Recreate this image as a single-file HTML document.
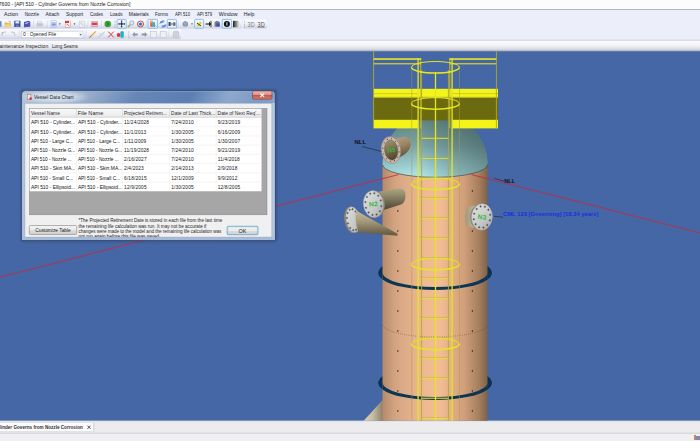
<!DOCTYPE html>
<html><head><meta charset="utf-8"><style>
*{margin:0;padding:0}
html,body{width:700px;height:441px;overflow:hidden;background:#4567a5}
svg{display:block;font-family:"Liberation Sans",sans-serif}
</style></head><body>
<svg width="700" height="441" viewBox="0 0 700 441">
<defs>
<linearGradient id="gTabrow" x1="0" y1="0" x2="0" y2="1">
 <stop offset="0" stop-color="#fdfdfe"/><stop offset="0.45" stop-color="#f3f3f7"/><stop offset="0.8" stop-color="#dcdce6"/><stop offset="1" stop-color="#a8a9ba"/>
</linearGradient>
<linearGradient id="gTb" x1="0" y1="0" x2="0" y2="1">
 <stop offset="0" stop-color="#fbfbfe"/><stop offset="0.6" stop-color="#eceef8"/><stop offset="1" stop-color="#d3d6e8"/>
</linearGradient>
<linearGradient id="gFrame" x1="0" y1="0" x2="1" y2="0.3">
 <stop offset="0" stop-color="#b2c2d8"/><stop offset="0.2" stop-color="#a6b8d0"/><stop offset="0.42" stop-color="#6686b8"/><stop offset="0.62" stop-color="#5c7eb3"/><stop offset="0.76" stop-color="#8ea8cc"/><stop offset="0.88" stop-color="#7c9ac6"/><stop offset="1" stop-color="#90aad0"/>
</linearGradient>
<linearGradient id="gClose" x1="0" y1="0" x2="0" y2="1">
 <stop offset="0" stop-color="#ecc0b8"/><stop offset="0.45" stop-color="#dc908a"/><stop offset="0.55" stop-color="#c85a4e"/><stop offset="1" stop-color="#d8806c"/>
</linearGradient>
<linearGradient id="gHdr" x1="0" y1="0" x2="0" y2="1">
 <stop offset="0" stop-color="#f8f8f8"/><stop offset="0.5" stop-color="#f2f2f2"/><stop offset="1" stop-color="#e6e6e6"/>
</linearGradient>
<linearGradient id="gBtn" x1="0" y1="0" x2="0" y2="1">
 <stop offset="0" stop-color="#f2f2f2"/><stop offset="0.5" stop-color="#ebebeb"/><stop offset="0.51" stop-color="#dddddd"/><stop offset="1" stop-color="#cfcfcf"/>
</linearGradient>
<radialGradient id="gGlow"><stop offset="0" stop-color="#e4ecf4" stop-opacity="0.9"/><stop offset="0.6" stop-color="#dce6f0" stop-opacity="0.6"/><stop offset="1" stop-color="#dce6f0" stop-opacity="0"/></radialGradient>
</defs>
<rect x="0" y="51" width="700" height="370" fill="#4567a5" />
<rect x="0" y="0" width="700" height="9.3" fill="#fcfcfd" />
<rect x="0" y="9.3" width="700" height="0.8" fill="#c6c7cd" />
<rect x="0" y="10" width="700" height="30" fill="#eceef9" />
<text x="-1.2" y="6.4" font-size="5.9" fill="#202020" font-weight="normal" text-anchor="start" textLength="131.5" lengthAdjust="spacingAndGlyphs" >7600 - [API 510 - Cylinder Governs from Nozzle Corrosion]</text>
<text x="4.1" y="15.5" font-size="5.0" fill="#222222" font-weight="normal" text-anchor="start" textLength="14.1" lengthAdjust="spacingAndGlyphs" >Action</text>
<text x="24.7" y="15.5" font-size="5.0" fill="#222222" font-weight="normal" text-anchor="start" textLength="14.3" lengthAdjust="spacingAndGlyphs" >Nozzle</text>
<text x="45.5" y="15.5" font-size="5.0" fill="#222222" font-weight="normal" text-anchor="start" textLength="13.7" lengthAdjust="spacingAndGlyphs" >Attach</text>
<text x="66" y="15.5" font-size="5.0" fill="#222222" font-weight="normal" text-anchor="start" textLength="17.2" lengthAdjust="spacingAndGlyphs" >Support</text>
<text x="90" y="15.5" font-size="5.0" fill="#222222" font-weight="normal" text-anchor="start" textLength="13" lengthAdjust="spacingAndGlyphs" >Codes</text>
<text x="110" y="15.5" font-size="5.0" fill="#222222" font-weight="normal" text-anchor="start" textLength="12.5" lengthAdjust="spacingAndGlyphs" >Loads</text>
<text x="128.8" y="15.5" font-size="5.0" fill="#222222" font-weight="normal" text-anchor="start" textLength="20.0" lengthAdjust="spacingAndGlyphs" >Materials</text>
<text x="155" y="15.5" font-size="5.0" fill="#222222" font-weight="normal" text-anchor="start" textLength="13" lengthAdjust="spacingAndGlyphs" >Forms</text>
<text x="175" y="15.5" font-size="5.0" fill="#222222" font-weight="normal" text-anchor="start" textLength="15" lengthAdjust="spacingAndGlyphs" >API 510</text>
<text x="197" y="15.5" font-size="5.0" fill="#222222" font-weight="normal" text-anchor="start" textLength="15" lengthAdjust="spacingAndGlyphs" >API 579</text>
<text x="218.8" y="15.5" font-size="5.0" fill="#222222" font-weight="normal" text-anchor="start" textLength="18.7" lengthAdjust="spacingAndGlyphs" >Window</text>
<text x="243.8" y="15.5" font-size="5.0" fill="#222222" font-weight="normal" text-anchor="start" textLength="10.7" lengthAdjust="spacingAndGlyphs" >Help</text>
<defs>
<linearGradient id="gTbs" x1="0" y1="0" x2="0" y2="1">
 <stop offset="0" stop-color="#fafbfe"/><stop offset="0.5" stop-color="#eef0f8"/><stop offset="1" stop-color="#cdd0e2"/>
</linearGradient>
<linearGradient id="gPress" x1="0" y1="0" x2="0" y2="1">
 <stop offset="0" stop-color="#f4f8fd"/><stop offset="1" stop-color="#dde9f7"/>
</linearGradient>
<linearGradient id="gGrad" x1="0" y1="0" x2="1" y2="0">
 <stop offset="0" stop-color="#202020"/><stop offset="1" stop-color="#f0f0f0"/>
</linearGradient>
</defs>
<rect x="-3" y="19.2" width="245" height="9.4" rx="1.5" fill="url(#gTbs)"/>
<rect x="243" y="19.2" width="24" height="9.4" rx="1.5" fill="url(#gTbs)"/>
<rect x="-3" y="29.0" width="129.5" height="10.3" rx="1.5" fill="url(#gTbs)"/>
<rect x="127" y="29.0" width="54" height="10.3" rx="1.5" fill="url(#gTbs)"/>
<rect x="-1" y="21.2" width="2.5" height="5.5" fill="#6a88c0"/>
<path d="M4.8 22.5 L7 22.5 L7.7 23.2 L10.9 23.2 L10.9 27 L4.8 27 Z" fill="#e3b447"/>
<path d="M5.2 24.2 L11.4 24.2 L10.6 27 L4.8 27 Z" fill="#f4d36e"/>
<path d="M8.5 21 L10.5 21.5 L9.5 23.2" fill="none" stroke="#7aa0d0" stroke-width="0.6"/>
<rect x="14.2" y="20.8" width="6.2" height="6.3" rx="0.5" fill="#2f4f9f"/>
<rect x="15.4" y="21.2" width="3.8" height="2.3" fill="#e8eef8"/>
<rect x="15.6" y="24.6" width="3.4" height="2.2" fill="#6a80c0"/>
<path d="M24 22 L28.5 20.8 L30.3 21.8 L30.3 26.8 L24 27.2 Z" fill="#4d54b8"/>
<path d="M25.3 23.5 L28.5 22.5" stroke="#e8eef8" stroke-width="0.9"/>
<line x1="33.7" y1="20.3" x2="33.7" y2="27.6" stroke="#b4b8c8" stroke-width="0.5"/>
<line x1="34.2" y1="20.3" x2="34.2" y2="27.6" stroke="#ffffff" stroke-width="0.5"/>
<rect x="36.6" y="23" width="6.4" height="3.2" rx="0.5" fill="#c6c8d0"/>
<rect x="37.8" y="21" width="4" height="2.4" fill="#e8e8ee" stroke="#c0c2ca" stroke-width="0.3"/>
<line x1="48" y1="20.3" x2="48" y2="27.6" stroke="#b4b8c8" stroke-width="0.5"/>
<line x1="48.5" y1="20.3" x2="48.5" y2="27.6" stroke="#ffffff" stroke-width="0.5"/>
<rect x="51" y="20.8" width="5.4" height="6.4" fill="#f4f6fc" stroke="#8aa0d0" stroke-width="0.4"/>
<path d="M51.6 23 L55.8 23 M51.6 24.4 L55.8 24.4 M51.6 25.8 L55.8 25.8" stroke="#3a64d0" stroke-width="0.7"/>
<path d="M58.8 23.6 L60.8 23.6 L59.8 24.8 Z" fill="#303030"/>
<rect x="65.2" y="21" width="5.4" height="6.2" fill="#fbf4f4" stroke="#c07070" stroke-width="0.4"/>
<rect x="65" y="21" width="4" height="2" fill="#d83a3a"/>
<path d="M66.5 24 L69.5 26" stroke="#d84040" stroke-width="0.8"/>
<path d="M73.5 23.6 L75.5 23.6 L74.5 24.8 Z" fill="#303030"/>
<rect x="79.2" y="21" width="5.4" height="6.2" fill="#eceef2" stroke="#b8bcc6" stroke-width="0.4"/>
<path d="M80.5 22.5 L83.5 26" stroke="#a8acb6" stroke-width="0.6"/>
<line x1="88.2" y1="20.3" x2="88.2" y2="27.6" stroke="#b4b8c8" stroke-width="0.5"/>
<line x1="88.7" y1="20.3" x2="88.7" y2="27.6" stroke="#ffffff" stroke-width="0.5"/>
<rect x="91.4" y="21.8" width="6.4" height="4.6" fill="#f2f2f6" stroke="#c04048" stroke-width="0.4"/>
<rect x="92" y="22.6" width="5.2" height="2.6" fill="#d23c48"/>
<line x1="101.5" y1="20.3" x2="101.5" y2="27.6" stroke="#b4b8c8" stroke-width="0.5"/>
<line x1="102.0" y1="20.3" x2="102.0" y2="27.6" stroke="#ffffff" stroke-width="0.5"/>
<circle cx="107.8" cy="24" r="3.3" fill="#3aa636"/>
<path d="M106.6 22.3 L108.8 24 L106.6 25.7" fill="none" stroke="#1d5c1d" stroke-width="0.8"/>
<rect x="114.6" y="20.8" width="0.8" height="0.8" fill="#9ea4b8"/>
<rect x="114.6" y="22.400000000000002" width="0.8" height="0.8" fill="#9ea4b8"/>
<rect x="114.6" y="24.000000000000004" width="0.8" height="0.8" fill="#9ea4b8"/>
<rect x="114.6" y="25.600000000000005" width="0.8" height="0.8" fill="#9ea4b8"/>
<rect x="114.6" y="27.200000000000006" width="0.8" height="0.8" fill="#9ea4b8"/>
<rect x="117.1" y="19.4" width="9.1" height="8.8" rx="0.8" fill="url(#gPress)" stroke="#66aae8" stroke-width="0.7"/>
<path d="M121.6 20.6 L121.6 27.2 M118.4 23.9 L124.9 23.9" stroke="#202020" stroke-width="0.7"/>
<circle cx="121.6" cy="23.9" r="1.1" fill="#303030"/>
<path d="M121.6 20.4 L120.6 21.6 L122.6 21.6 Z M121.6 27.4 L120.6 26.2 L122.6 26.2 Z M118.2 23.9 L119.4 22.9 L119.4 24.9 Z M125.1 23.9 L123.9 22.9 L123.9 24.9 Z" fill="#202020"/>
<circle cx="131.8" cy="22.9" r="2.1" fill="#d8ecf8" stroke="#7890a8" stroke-width="0.6"/>
<path d="M130.2 24.6 L127.9 27" stroke="#c08830" stroke-width="1.1"/>
<circle cx="140.5" cy="24" r="3.0" fill="none" stroke="#c04a30" stroke-width="1.0"/>
<circle cx="140.5" cy="24" r="1.6" fill="#2f6ad0"/>
<line x1="146.4" y1="20.3" x2="146.4" y2="27.6" stroke="#b4b8c8" stroke-width="0.5"/>
<line x1="146.9" y1="20.3" x2="146.9" y2="27.6" stroke="#ffffff" stroke-width="0.5"/>
<rect x="148" y="19.4" width="9.6" height="8.8" rx="0.8" fill="url(#gPress)" stroke="#66aae8" stroke-width="0.7"/>
<rect x="150.2" y="20.8" width="2.6" height="6" fill="#e06040"/>
<rect x="152.6" y="22.2" width="2.4" height="4.8" fill="#38b0c8"/>
<rect x="150.6" y="21.2" width="2" height="1.6" fill="#f0c040"/>
<path d="M155 25 L156.6 26.6" stroke="#909090" stroke-width="0.6"/>
<path d="M160 23.5 Q160 21 163 21 L164.5 21" fill="none" stroke="#3a7ad8" stroke-width="1"/>
<path d="M166 24.5 Q166 27 163 27 L161.5 27" fill="none" stroke="#3a7ad8" stroke-width="1"/>
<path d="M162 20.5 L164 22.5 L160.5 23.5 Z M164 27.5 L161.8 25.5 L165.6 24.6 Z" fill="#5a9ae8"/>
<rect x="167.3" y="19.4" width="9.3" height="8.8" rx="0.8" fill="url(#gPress)" stroke="#66aae8" stroke-width="0.7"/>
<rect x="168.6" y="22" width="2" height="4" fill="#404040"/>
<rect x="171.2" y="23.4" width="1.4" height="1.2" fill="#404040"/>
<rect x="173.2" y="22.4" width="2.2" height="3.4" fill="#606060"/>
<line x1="179" y1="20.3" x2="179" y2="27.6" stroke="#b4b8c8" stroke-width="0.5"/>
<line x1="179.5" y1="20.3" x2="179.5" y2="27.6" stroke="#ffffff" stroke-width="0.5"/>
<path d="M182.6 22.2 L185.3 21 L188 22.2 L188 25.8 L185.3 27.1 L182.6 25.8 Z" fill="#8a98a8"/>
<path d="M182.6 22.2 L185.3 23.4 L188 22.2 M185.3 23.4 L185.3 27.1" fill="none" stroke="#d0d8e0" stroke-width="0.4"/>
<path d="M191 23.6 L193 23.6 L192 24.8 Z" fill="#303030"/>
<rect x="194.6" y="19.4" width="9.0" height="8.8" rx="0.8" fill="url(#gPress)" stroke="#66aae8" stroke-width="0.7"/>
<path d="M196.3 25.8 L200.4 21.4 L202 23 L197.9 27.3 Z" fill="#e8d020"/>
<path d="M197 23 L201 26" stroke="#202020" stroke-width="0.9"/>
<path d="M205.6 24 L209.3 24" stroke="#181818" stroke-width="1.1"/>
<path d="M209 21.6 L211.3 24 L209 26.4 Z" fill="#181818"/>
<rect x="210.6" y="20.8" width="0.8" height="6.4" fill="#181818"/>
<path d="M214.6 22 L217 20.8 L219.8 22 L219.8 26.8 L214.6 26.8 Z" fill="#7a7a80"/>
<rect x="216.4" y="23.4" width="3.2" height="3" fill="#3050d8"/>
<rect x="222.2" y="19.4" width="9.4" height="8.8" rx="0.8" fill="url(#gPress)" stroke="#66aae8" stroke-width="0.7"/>
<circle cx="226.9" cy="23.9" r="3.0" fill="#101010"/>
<rect x="226.4" y="22.2" width="1" height="3.4" fill="#f0f0f0"/>
<rect x="233" y="20.8" width="6.4" height="6.4" fill="url(#gGrad)"/>
<rect x="244" y="20.8" width="0.8" height="0.8" fill="#9ea4b8"/>
<rect x="244" y="22.400000000000002" width="0.8" height="0.8" fill="#9ea4b8"/>
<rect x="244" y="24.000000000000004" width="0.8" height="0.8" fill="#9ea4b8"/>
<rect x="244" y="25.600000000000005" width="0.8" height="0.8" fill="#9ea4b8"/>
<rect x="244" y="27.200000000000006" width="0.8" height="0.8" fill="#9ea4b8"/>
<text x="247.6" y="26.8" font-size="6.3" fill="#7c7c7c" font-weight="normal" text-anchor="start" textLength="7.0" lengthAdjust="spacingAndGlyphs" >3D</text>
<text x="257.6" y="26.8" font-size="6.3" fill="#505050" font-weight="normal" text-anchor="start" textLength="7.0" lengthAdjust="spacingAndGlyphs" >3D</text>
<line x1="257.6" y1="27.4" x2="264.8" y2="27.4" stroke="#6a6a6a" stroke-width="0.5"/>
<path d="M2 35.5 Q1.8 32 4.5 32 L5.8 32" fill="none" stroke="#b4b8c4" stroke-width="0.9"/>
<path d="M1.2 33.3 L2.4 31.8 L3.2 34.2 Z" fill="#b4b8c4"/>
<path d="M15 35.5 Q15.2 32 12.5 32 L11.2 32" fill="none" stroke="#b4b8c4" stroke-width="0.9"/>
<line x1="19.3" y1="30" x2="19.3" y2="38.4" stroke="#b4b8c8" stroke-width="0.5"/>
<line x1="19.8" y1="30" x2="19.8" y2="38.4" stroke="#ffffff" stroke-width="0.5"/>
<rect x="21.2" y="31.1" width="61.7" height="6.7" fill="#ffffff" stroke="#aab0c6" stroke-width="0.5"/>
<rect x="78.6" y="31.4" width="4" height="6.1" fill="#f0f2f8"/>
<path d="M79.7 34.2 L81.7 34.2 L80.7 35.400000000000006 Z" fill="#303030"/>
<text x="22.9" y="36.2" font-size="5.2" fill="#1a1a1a" font-weight="normal" text-anchor="start" textLength="33.2" lengthAdjust="spacingAndGlyphs" >0 : Opened File</text>
<line x1="86.3" y1="30" x2="86.3" y2="38.4" stroke="#b4b8c8" stroke-width="0.5"/>
<line x1="86.8" y1="30" x2="86.8" y2="38.4" stroke="#ffffff" stroke-width="0.5"/>
<path d="M89.8 37.3 L95.8 31.4" stroke="#e4a830" stroke-width="1.2"/>
<path d="M89.6 37.5 L90.6 36.4" stroke="#6a5030" stroke-width="0.8"/>
<path d="M98.7 37.2 L104.8 31.6" stroke="#c8ccd6" stroke-width="1.1"/>
<path d="M99 33.5 Q101 35 104 34" fill="none" stroke="#c0c4ce" stroke-width="0.5"/>
<path d="M108.2 31.6 L113.8 37.4 M113.8 31.6 L108.2 37.4" stroke="#d83c34" stroke-width="1.0"/>
<circle cx="118.6" cy="35" r="1.9" fill="#e83030"/>
<rect x="120.4" y="31.2" width="3.4" height="6.6" rx="1" fill="#20b0d0"/>
<rect x="128.4" y="30.8" width="0.8" height="0.8" fill="#9ea4b8"/>
<rect x="128.4" y="32.4" width="0.8" height="0.8" fill="#9ea4b8"/>
<rect x="128.4" y="34.0" width="0.8" height="0.8" fill="#9ea4b8"/>
<rect x="128.4" y="35.6" width="0.8" height="0.8" fill="#9ea4b8"/>
<rect x="128.4" y="37.2" width="0.8" height="0.8" fill="#9ea4b8"/>
<path d="M132.2 34.5 L134.8 32 L134.8 33.6 L137.7 33.6 L137.7 35.4 L134.8 35.4 L134.8 37 Z" fill="#8e96a6"/>
<path d="M147.3 34.5 L144.7 32 L144.7 33.6 L141.6 33.6 L141.6 35.4 L144.7 35.4 L144.7 37 Z" fill="#8e96a6"/>
<rect x="150.7" y="31.4" width="6" height="6.2" fill="#eef0f4" stroke="#b8bcc8" stroke-width="0.5"/>
<rect x="160.2" y="31.4" width="6" height="6.2" fill="#eef0f4" stroke="#b8bcc8" stroke-width="0.5"/>
<line x1="169.2" y1="30" x2="169.2" y2="38.4" stroke="#b4b8c8" stroke-width="0.5"/>
<line x1="169.7" y1="30" x2="169.7" y2="38.4" stroke="#ffffff" stroke-width="0.5"/>
<rect x="173.4" y="31.2" width="5.2" height="6.6" rx="1" fill="#d0d2d8" stroke="#a8acb6" stroke-width="0.4"/>
<rect x="0" y="39.6" width="700" height="0.8" fill="#d4d5dd" />
<rect x="0" y="40.3" width="700" height="11" fill="url(#gTabrow)" />
<text x="-0.5" y="47.9" font-size="5.3" fill="#222222" font-weight="normal" text-anchor="start" textLength="48.7" lengthAdjust="spacingAndGlyphs" >aintenance Inspection</text>
<text x="52" y="47.9" font-size="5.3" fill="#222222" font-weight="normal" text-anchor="start" textLength="25.8" lengthAdjust="spacingAndGlyphs" >Long Seams</text>
<rect x="0" y="420.8" width="700" height="12.2" fill="#ececee" />
<rect x="0" y="420.8" width="700" height="1.2" fill="#e2e3e8" />
<rect x="-1" y="422.5" width="94.5" height="9" fill="#fbfbfb" stroke='#d2d2d6' stroke-width='0.5'/>
<rect x="93.6" y="423" width="0.6" height="8.5" fill="#c8c8cc" />
<text x="-0.4" y="429.0" font-size="5.3" fill="#141414" font-weight="bold" text-anchor="start" textLength="83.2" lengthAdjust="spacingAndGlyphs" opacity="0.9">linder Governs from Nozzle Corrosion</text>
<path d="M87.4 425.6 L90.6 428.9 M90.6 425.6 L87.4 428.9" stroke="#2a2a2a" stroke-width="0.8"/>
<rect x="0" y="432.6" width="700" height="0.6" fill="#d6d6d8" />
<rect x="0" y="433.2" width="700" height="7.8" fill="#f0f0f0" />
<rect x="694" y="435" width="2" height="5" fill="#d08060"/><rect x="696" y="436" width="4" height="4" fill="#7090b0"/>
<clipPath id="clipView"><rect x="0" y="51.2" width="700" height="369.6"/></clipPath><g clip-path="url(#clipView)">
<defs>
<linearGradient id="gCyl" gradientUnits="userSpaceOnUse" x1="382.5" y1="0" x2="487.5" y2="0">
 <stop offset="0" stop-color="#b48a6a"/><stop offset="0.12" stop-color="#d4a482"/><stop offset="0.4" stop-color="#efba92"/><stop offset="0.55" stop-color="#f2bd94"/><stop offset="0.78" stop-color="#d09e7a"/><stop offset="0.92" stop-color="#a57e5e"/><stop offset="1" stop-color="#806248"/>
</linearGradient>
<linearGradient id="gDome" gradientUnits="userSpaceOnUse" x1="0" y1="178" x2="0" y2="120">
 <stop offset="0" stop-color="#b4eaee"/><stop offset="0.2" stop-color="#a0d2d6"/><stop offset="0.55" stop-color="#7ea6a8"/><stop offset="1" stop-color="#628686"/>
</linearGradient>
<linearGradient id="gDomeR" gradientUnits="userSpaceOnUse" x1="382" y1="0" x2="488" y2="0">
 <stop offset="0" stop-color="#1e3434" stop-opacity="0.08"/><stop offset="0.35" stop-color="#1e3434" stop-opacity="0"/><stop offset="0.7" stop-color="#1e3434" stop-opacity="0.25"/><stop offset="1" stop-color="#1e3434" stop-opacity="0.42"/>
</linearGradient>
<linearGradient id="gPipe" x1="0" y1="0" x2="0" y2="1">
 <stop offset="0" stop-color="#e2d6b6"/><stop offset="0.35" stop-color="#c9b994"/><stop offset="1" stop-color="#6e6248"/>
</linearGradient>
<linearGradient id="gFace" x1="0" y1="0" x2="1" y2="1">
 <stop offset="0" stop-color="#b8ac90"/><stop offset="1" stop-color="#6c6048"/>
</linearGradient>
<linearGradient id="gFl" x1="0" y1="0" x2="1" y2="1">
 <stop offset="0" stop-color="#ece6e0"/><stop offset="0.6" stop-color="#cfc6bc"/><stop offset="1" stop-color="#9a9088"/>
</linearGradient>
<linearGradient id="gPipe5" x1="0" y1="0" x2="0.3" y2="1">
 <stop offset="0" stop-color="#bca888"/><stop offset="0.5" stop-color="#9a8466"/><stop offset="1" stop-color="#5e4e38"/>
</linearGradient>
<linearGradient id="gFace5" x1="0" y1="0" x2="0.2" y2="1">
 <stop offset="0" stop-color="#a49a74"/><stop offset="0.6" stop-color="#746848"/><stop offset="1" stop-color="#524630"/>
</linearGradient>
<linearGradient id="gPipe2" x1="0" y1="0" x2="0" y2="1">
 <stop offset="0" stop-color="#aca484"/><stop offset="0.3" stop-color="#928a6c"/><stop offset="1" stop-color="#48422f"/>
</linearGradient>
<linearGradient id="gPipe4" x1="0" y1="0" x2="0" y2="1">
 <stop offset="0" stop-color="#c8bc9a"/><stop offset="0.4" stop-color="#a89c7c"/><stop offset="1" stop-color="#5e5642"/>
</linearGradient>
<linearGradient id="gPipe3" x1="0" y1="0" x2="1" y2="0">
 <stop offset="0" stop-color="#a09878"/><stop offset="1" stop-color="#d0c8b0"/>
</linearGradient>
<linearGradient id="gFlW" x1="0" y1="0" x2="1" y2="1">
 <stop offset="0" stop-color="#dfe3e3"/><stop offset="0.6" stop-color="#c4c8c8"/><stop offset="1" stop-color="#a2a6a6"/>
</linearGradient>
<linearGradient id="gPipeB" x1="0" y1="0" x2="1" y2="0">
 <stop offset="0" stop-color="#e0d8c0"/><stop offset="0.5" stop-color="#c4baa0"/><stop offset="1" stop-color="#8a8068"/>
</linearGradient>
</defs>
<g id="scene">
<path d="M363.5 421 L383 399.5 L383 421 Z" fill="url(#gPipeB)"/>
<ellipse cx="435.1" cy="272.4" rx="56.6" ry="16.8" fill="#0e3a5a"/>
<ellipse cx="435.1" cy="273.2" rx="56.6" ry="16.8" fill="#0b3252"/>
<ellipse cx="435.1" cy="382.4" rx="56.6" ry="16.8" fill="#0e3a5a"/>
<ellipse cx="435.1" cy="383.2" rx="56.6" ry="16.8" fill="#0b3252"/>
<rect x="382.5" y="164" width="105" height="260" fill="url(#gCyl)"/>
<path d="M382.5 272.4 A52.6 14.6 0 0 0 487.7 272.4 L487.7 279.40 A56.6 16.8 0 0 1 382.5 279.40 Z" fill="#0c3656"/>
<path d="M382.5 382.4 A52.6 14.6 0 0 0 487.7 382.4 L487.7 389.40 A56.6 16.8 0 0 1 382.5 389.40 Z" fill="#0c3656"/>
<path d="M382.5 164.5 A52.5 52 0 0 1 487.5 164.5 A52.5 12.8 0 0 1 382.5 164.5 Z" fill="url(#gDome)"/>
<path d="M382.5 164.5 A52.5 52 0 0 1 487.5 164.5 A52.5 12.8 0 0 1 382.5 164.5 Z" fill="url(#gDomeR)"/>
<path d="M382.5 164.5 A52.5 12.8 0 0 0 487.5 164.5" fill="none" stroke="#283838" stroke-width="0.6"/>
<path d="M-2 277.7 L398.5 174.6" stroke="#c8283e" stroke-width="0.85" fill="none"/>
<path d="M471.5 174.6 L702 233.4" stroke="#c8283e" stroke-width="0.85" fill="none"/>
<path d="M383 325.3 A52.3 12.4 0 0 0 487.4 325.3" fill="none" stroke="#4a3428" stroke-width="0.55" stroke-dasharray="0.7 1.5"/>
<rect x="397.2" y="190.4" width="1.2" height="1.2" fill="#201814"/>
<rect x="397.2" y="210.4" width="1.2" height="1.2" fill="#201814"/>
<rect x="397.2" y="230.4" width="1.2" height="1.2" fill="#201814"/>
<rect x="397.2" y="250.4" width="1.2" height="1.2" fill="#201814"/>
<rect x="397.2" y="270.4" width="1.2" height="1.2" fill="#201814"/>
<rect x="397.2" y="290.4" width="1.2" height="1.2" fill="#201814"/>
<rect x="397.2" y="310.4" width="1.2" height="1.2" fill="#201814"/>
<rect x="397.2" y="330.4" width="1.2" height="1.2" fill="#201814"/>
<rect x="397.2" y="350.4" width="1.2" height="1.2" fill="#201814"/>
<rect x="397.2" y="370.4" width="1.2" height="1.2" fill="#201814"/>
<rect x="397.2" y="390.4" width="1.2" height="1.2" fill="#201814"/>
<rect x="397.2" y="410.4" width="1.2" height="1.2" fill="#201814"/>
<rect x="471.79999999999995" y="190.4" width="1.2" height="1.2" fill="#201814"/>
<rect x="471.79999999999995" y="210.4" width="1.2" height="1.2" fill="#201814"/>
<rect x="471.79999999999995" y="230.4" width="1.2" height="1.2" fill="#201814"/>
<rect x="471.79999999999995" y="250.4" width="1.2" height="1.2" fill="#201814"/>
<rect x="471.79999999999995" y="270.4" width="1.2" height="1.2" fill="#201814"/>
<rect x="471.79999999999995" y="290.4" width="1.2" height="1.2" fill="#201814"/>
<rect x="471.79999999999995" y="310.4" width="1.2" height="1.2" fill="#201814"/>
<rect x="471.79999999999995" y="330.4" width="1.2" height="1.2" fill="#201814"/>
<rect x="471.79999999999995" y="350.4" width="1.2" height="1.2" fill="#201814"/>
<rect x="471.79999999999995" y="370.4" width="1.2" height="1.2" fill="#201814"/>
<rect x="471.79999999999995" y="390.4" width="1.2" height="1.2" fill="#201814"/>
<rect x="471.79999999999995" y="410.4" width="1.2" height="1.2" fill="#201814"/>
</g>
<g id="platform">
<rect x="373.6" y="97.4" width="124.4" height="23" fill="#6c6a10" />
<rect x="373.6" y="88.8" width="124.4" height="8.8" fill="#f4f41a" />
<line x1="373.6" y1="97.2" x2="498" y2="97.2" stroke="#b4ac1e" stroke-width="0.6"/>
<rect x="373.6" y="119.8" width="44.6" height="8.6" fill="#f4f41a" />
<rect x="452.2" y="119.8" width="45.8" height="8.6" fill="#f4f41a" />
<line x1="373.6" y1="93.6" x2="418" y2="93.6" stroke="#b4ac1e" stroke-width="0.5"/>
<line x1="452.2" y1="93.6" x2="498" y2="93.6" stroke="#b4ac1e" stroke-width="0.5"/>
<line x1="373.6" y1="51" x2="373.6" y2="128.4" stroke="#b4ac1e" stroke-width="0.9"/>
<line x1="496.4" y1="51" x2="496.4" y2="128.4" stroke="#b4ac1e" stroke-width="0.9"/>
<line x1="420.8" y1="58" x2="420.8" y2="128.4" stroke="#c8c024" stroke-width="1.0"/>
<line x1="449.8" y1="58" x2="449.8" y2="128.4" stroke="#c8c024" stroke-width="1.0"/>
<rect x="373.6" y="58.2" width="47.4" height="1.7" fill="#e2de2c"/>
<rect x="373.6" y="63.1" width="47.4" height="1.3" fill="#d2cc30"/>
<rect x="449.6" y="58.2" width="46.8" height="1.7" fill="#e2de2c"/>
<rect x="449.6" y="63.1" width="46.8" height="1.3" fill="#d2cc30"/>
</g>
<g id="ladder">
<line x1="411.8" y1="66" x2="411.8" y2="421" stroke="#a89c3c" stroke-width="0.6" opacity="0.8"/>
<line x1="459.5" y1="66" x2="459.5" y2="421" stroke="#a89c3c" stroke-width="0.6" opacity="0.8"/>
<line x1="421.6" y1="70" x2="421.6" y2="421" stroke="#b0a838" stroke-width="0.9"/>
<line x1="448.4" y1="70" x2="448.4" y2="421" stroke="#b0a838" stroke-width="0.9"/>
<line x1="421.6" y1="137.5" x2="448.4" y2="137.5" stroke="#8a8030" stroke-width="0.5" opacity="0.6"/>
<line x1="421.6" y1="138.2" x2="448.4" y2="138.2" stroke="#e6e61e" stroke-width="1.1"/>
<line x1="421.6" y1="157.5" x2="448.4" y2="157.5" stroke="#8a8030" stroke-width="0.5" opacity="0.6"/>
<line x1="421.6" y1="158.2" x2="448.4" y2="158.2" stroke="#e6e61e" stroke-width="1.1"/>
<line x1="421.6" y1="177.5" x2="448.4" y2="177.5" stroke="#8a8030" stroke-width="0.5" opacity="0.6"/>
<line x1="421.6" y1="178.2" x2="448.4" y2="178.2" stroke="#e6e61e" stroke-width="1.1"/>
<line x1="421.6" y1="197.5" x2="448.4" y2="197.5" stroke="#8a8030" stroke-width="0.5" opacity="0.6"/>
<line x1="421.6" y1="198.2" x2="448.4" y2="198.2" stroke="#e6e61e" stroke-width="1.1"/>
<line x1="421.6" y1="217.5" x2="448.4" y2="217.5" stroke="#8a8030" stroke-width="0.5" opacity="0.6"/>
<line x1="421.6" y1="218.2" x2="448.4" y2="218.2" stroke="#e6e61e" stroke-width="1.1"/>
<line x1="421.6" y1="237.5" x2="448.4" y2="237.5" stroke="#8a8030" stroke-width="0.5" opacity="0.6"/>
<line x1="421.6" y1="238.2" x2="448.4" y2="238.2" stroke="#e6e61e" stroke-width="1.1"/>
<line x1="421.6" y1="257.5" x2="448.4" y2="257.5" stroke="#8a8030" stroke-width="0.5" opacity="0.6"/>
<line x1="421.6" y1="258.2" x2="448.4" y2="258.2" stroke="#e6e61e" stroke-width="1.1"/>
<line x1="421.6" y1="277.5" x2="448.4" y2="277.5" stroke="#8a8030" stroke-width="0.5" opacity="0.6"/>
<line x1="421.6" y1="278.2" x2="448.4" y2="278.2" stroke="#e6e61e" stroke-width="1.1"/>
<line x1="421.6" y1="297.5" x2="448.4" y2="297.5" stroke="#8a8030" stroke-width="0.5" opacity="0.6"/>
<line x1="421.6" y1="298.2" x2="448.4" y2="298.2" stroke="#e6e61e" stroke-width="1.1"/>
<line x1="421.6" y1="317.5" x2="448.4" y2="317.5" stroke="#8a8030" stroke-width="0.5" opacity="0.6"/>
<line x1="421.6" y1="318.2" x2="448.4" y2="318.2" stroke="#e6e61e" stroke-width="1.1"/>
<line x1="421.6" y1="337.5" x2="448.4" y2="337.5" stroke="#8a8030" stroke-width="0.5" opacity="0.6"/>
<line x1="421.6" y1="338.2" x2="448.4" y2="338.2" stroke="#e6e61e" stroke-width="1.1"/>
<line x1="421.6" y1="357.5" x2="448.4" y2="357.5" stroke="#8a8030" stroke-width="0.5" opacity="0.6"/>
<line x1="421.6" y1="358.2" x2="448.4" y2="358.2" stroke="#e6e61e" stroke-width="1.1"/>
<line x1="421.6" y1="377.5" x2="448.4" y2="377.5" stroke="#8a8030" stroke-width="0.5" opacity="0.6"/>
<line x1="421.6" y1="378.2" x2="448.4" y2="378.2" stroke="#e6e61e" stroke-width="1.1"/>
<line x1="421.6" y1="397.5" x2="448.4" y2="397.5" stroke="#8a8030" stroke-width="0.5" opacity="0.6"/>
<line x1="421.6" y1="398.2" x2="448.4" y2="398.2" stroke="#e6e61e" stroke-width="1.1"/>
<line x1="421.6" y1="417.5" x2="448.4" y2="417.5" stroke="#8a8030" stroke-width="0.5" opacity="0.6"/>
<line x1="421.6" y1="418.2" x2="448.4" y2="418.2" stroke="#e6e61e" stroke-width="1.1"/>
<path d="M411.5 67.3 A23.9 5.8 0 0 1 459.3 67.3" fill="none" stroke="#e6e61e" stroke-width="1.0"/>
<path d="M411.5 67.3 A23.9 5.8 0 0 0 459.3 67.3" fill="none" stroke="#e6e61e" stroke-width="1.5"/>
<path d="M411.5 103.5 A23.9 5.8 0 0 1 459.3 103.5" fill="none" stroke="#e6e61e" stroke-width="1.0"/>
<path d="M411.5 103.5 A23.9 5.8 0 0 0 459.3 103.5" fill="none" stroke="#e6e61e" stroke-width="1.5"/>
<path d="M411.5 184 A23.9 5.8 0 0 1 459.3 184" fill="none" stroke="#e6e61e" stroke-width="1.0"/>
<path d="M411.5 184 A23.9 5.8 0 0 0 459.3 184" fill="none" stroke="#e6e61e" stroke-width="1.5"/>
<path d="M411.5 264.2 A23.9 5.8 0 0 1 459.3 264.2" fill="none" stroke="#e6e61e" stroke-width="1.0"/>
<path d="M411.5 264.2 A23.9 5.8 0 0 0 459.3 264.2" fill="none" stroke="#e6e61e" stroke-width="1.5"/>
<path d="M411.5 344 A23.9 5.8 0 0 1 459.3 344" fill="none" stroke="#e6e61e" stroke-width="1.0"/>
<path d="M411.5 344 A23.9 5.8 0 0 0 459.3 344" fill="none" stroke="#e6e61e" stroke-width="1.5"/>
<line x1="418.1" y1="58" x2="418.1" y2="421" stroke="#e6e61e" stroke-width="1.3"/>
<line x1="452.1" y1="58" x2="452.1" y2="421" stroke="#e6e61e" stroke-width="1.3"/>
<line x1="435.5" y1="72" x2="435.5" y2="421" stroke="#e6e61e" stroke-width="1.3"/>
</g>
<g id="nozzles">
<path d="M391 140 L405 136.5 Q411 138 410.5 146 Q409 152 402 156 L394 160 Z" fill="url(#gPipe5)"/>
<g transform="translate(390.9 150) rotate(-8)">
<ellipse rx="9.8" ry="13.6" fill="#c6b6a8" stroke="#8a7c74" stroke-width="0.5"/>
<ellipse cx="0.3" cy="0.2" rx="6.6" ry="10" fill="url(#gFace5)" stroke="#6a5a48" stroke-width="0.5"/>
<circle cx="7.76" cy="2.96" r="0.55" fill="#4a3040"/>
<circle cx="5.68" cy="8.08" r="0.55" fill="#4a3040"/>
<circle cx="2.08" cy="11.03" r="0.55" fill="#4a3040"/>
<circle cx="-2.08" cy="11.03" r="0.55" fill="#4a3040"/>
<circle cx="-5.68" cy="8.08" r="0.55" fill="#4a3040"/>
<circle cx="-7.76" cy="2.96" r="0.55" fill="#4a3040"/>
<circle cx="-7.76" cy="-2.96" r="0.55" fill="#4a3040"/>
<circle cx="-5.68" cy="-8.08" r="0.55" fill="#4a3040"/>
<circle cx="-2.08" cy="-11.03" r="0.55" fill="#4a3040"/>
<circle cx="2.08" cy="-11.03" r="0.55" fill="#4a3040"/>
<circle cx="5.68" cy="-8.08" r="0.55" fill="#4a3040"/>
<circle cx="7.76" cy="-2.96" r="0.55" fill="#4a3040"/>
<text x="0.5" y="2.4" font-size="6.2" fill="#3cb03c" text-anchor="middle" font-weight="bold" textLength="8" lengthAdjust="spacingAndGlyphs">N5</text>
</g>
<path d="M376 192 L400 188.5 Q406 189 405.5 196.5 Q405 203 401 204.5 L382 210.5 Z" fill="url(#gPipe2)"/>
<g transform="translate(373.4 204.1) rotate(-6)">
<ellipse cx="1.2" rx="10.2" ry="13.6" fill="#8e8678"/>
<ellipse rx="10.0" ry="13.5" fill="url(#gFlW)" stroke="#a8a49a" stroke-width="0.4"/>
<circle cx="7.73" cy="2.87" r="0.75" fill="#6a6460" stroke="#4a4440" stroke-width="0.4"/>
<circle cx="5.66" cy="7.83" r="0.75" fill="#6a6460" stroke="#4a4440" stroke-width="0.4"/>
<circle cx="2.07" cy="10.69" r="0.75" fill="#6a6460" stroke="#4a4440" stroke-width="0.4"/>
<circle cx="-2.07" cy="10.69" r="0.75" fill="#6a6460" stroke="#4a4440" stroke-width="0.4"/>
<circle cx="-5.66" cy="7.83" r="0.75" fill="#6a6460" stroke="#4a4440" stroke-width="0.4"/>
<circle cx="-7.73" cy="2.87" r="0.75" fill="#6a6460" stroke="#4a4440" stroke-width="0.4"/>
<circle cx="-7.73" cy="-2.87" r="0.75" fill="#6a6460" stroke="#4a4440" stroke-width="0.4"/>
<circle cx="-5.66" cy="-7.83" r="0.75" fill="#6a6460" stroke="#4a4440" stroke-width="0.4"/>
<circle cx="-2.07" cy="-10.69" r="0.75" fill="#6a6460" stroke="#4a4440" stroke-width="0.4"/>
<circle cx="2.07" cy="-10.69" r="0.75" fill="#6a6460" stroke="#4a4440" stroke-width="0.4"/>
<circle cx="5.66" cy="-7.83" r="0.75" fill="#6a6460" stroke="#4a4440" stroke-width="0.4"/>
<circle cx="7.73" cy="-2.87" r="0.75" fill="#6a6460" stroke="#4a4440" stroke-width="0.4"/>
<text x="0" y="2.3" font-size="6.4" fill="#38b838" text-anchor="middle" font-weight="bold" textLength="8.6" lengthAdjust="spacingAndGlyphs">N2</text>
</g>
<g transform="translate(352.9 219.7) rotate(-10)">
<ellipse cx="-1.0" rx="7.6" ry="13.4" fill="#8a8478"/>
<ellipse cx="0.3" rx="7.2" ry="13.1" fill="url(#gFlW)" stroke="#8a8478" stroke-width="0.4"/>
<circle cx="5.56" cy="2.78" r="0.75" fill="#6a6460" stroke="#4a4440" stroke-width="0.4"/>
<circle cx="4.07" cy="7.60" r="0.75" fill="#6a6460" stroke="#4a4440" stroke-width="0.4"/>
<circle cx="1.49" cy="10.38" r="0.75" fill="#6a6460" stroke="#4a4440" stroke-width="0.4"/>
<circle cx="-1.49" cy="10.38" r="0.75" fill="#6a6460" stroke="#4a4440" stroke-width="0.4"/>
<circle cx="-4.07" cy="7.60" r="0.75" fill="#6a6460" stroke="#4a4440" stroke-width="0.4"/>
<circle cx="-5.56" cy="2.78" r="0.75" fill="#6a6460" stroke="#4a4440" stroke-width="0.4"/>
<circle cx="-5.56" cy="-2.78" r="0.75" fill="#6a6460" stroke="#4a4440" stroke-width="0.4"/>
<circle cx="-4.07" cy="-7.60" r="0.75" fill="#6a6460" stroke="#4a4440" stroke-width="0.4"/>
<circle cx="-1.49" cy="-10.38" r="0.75" fill="#6a6460" stroke="#4a4440" stroke-width="0.4"/>
<circle cx="1.49" cy="-10.38" r="0.75" fill="#6a6460" stroke="#4a4440" stroke-width="0.4"/>
<circle cx="4.07" cy="-7.60" r="0.75" fill="#6a6460" stroke="#4a4440" stroke-width="0.4"/>
<circle cx="5.56" cy="-2.78" r="0.75" fill="#6a6460" stroke="#4a4440" stroke-width="0.4"/>
</g>
<path d="M356 210.5 L397.5 233.8 L397.5 235.8 L358.5 232.5 Q354.5 221 356 210.5 Z" fill="url(#gPipe4)"/>
<path d="M478 205 L468 207 Q463 216 466.5 226 L480 229 Z" fill="url(#gPipe3)"/>
<g transform="translate(482 217) rotate(4)">
<ellipse cx="-1.2" rx="10.7" ry="13.3" fill="#8c8a80"/>
<ellipse rx="10.4" ry="13.2" fill="url(#gFlW)" stroke="#a8a49a" stroke-width="0.4"/>
<circle cx="8.04" cy="2.80" r="0.75" fill="#6a6460" stroke="#3a3834" stroke-width="0.4"/>
<circle cx="5.88" cy="7.65" r="0.75" fill="#6a6460" stroke="#3a3834" stroke-width="0.4"/>
<circle cx="2.15" cy="10.46" r="0.75" fill="#6a6460" stroke="#3a3834" stroke-width="0.4"/>
<circle cx="-2.15" cy="10.46" r="0.75" fill="#6a6460" stroke="#3a3834" stroke-width="0.4"/>
<circle cx="-5.88" cy="7.65" r="0.75" fill="#6a6460" stroke="#3a3834" stroke-width="0.4"/>
<circle cx="-8.04" cy="2.80" r="0.75" fill="#6a6460" stroke="#3a3834" stroke-width="0.4"/>
<circle cx="-8.04" cy="-2.80" r="0.75" fill="#6a6460" stroke="#3a3834" stroke-width="0.4"/>
<circle cx="-5.88" cy="-7.65" r="0.75" fill="#6a6460" stroke="#3a3834" stroke-width="0.4"/>
<circle cx="-2.15" cy="-10.46" r="0.75" fill="#6a6460" stroke="#3a3834" stroke-width="0.4"/>
<circle cx="2.15" cy="-10.46" r="0.75" fill="#6a6460" stroke="#3a3834" stroke-width="0.4"/>
<circle cx="5.88" cy="-7.65" r="0.75" fill="#6a6460" stroke="#3a3834" stroke-width="0.4"/>
<circle cx="8.04" cy="-2.80" r="0.75" fill="#6a6460" stroke="#3a3834" stroke-width="0.4"/>
<text x="0" y="2.4" font-size="6.6" fill="#38b838" text-anchor="middle" font-weight="bold" textLength="8.6" lengthAdjust="spacingAndGlyphs">N3</text>
</g>
</g>
<path d="M362 146.5 L381.5 151.5" stroke="#202028" stroke-width="0.6"/>
<text x="354.6" y="144" font-size="5.0" fill="#101018" font-weight="bold" text-anchor="start" textLength="11.5" lengthAdjust="spacingAndGlyphs" >NLL</text>
<path d="M494 178.3 L504 181.2" stroke="#202028" stroke-width="0.6"/>
<text x="504.2" y="183.4" font-size="5.0" fill="#101018" font-weight="bold" text-anchor="start" textLength="11" lengthAdjust="spacingAndGlyphs" >NLL</text>
<path d="M494 216.3 L503 217.2" stroke="#202028" stroke-width="0.6"/>
<text x="503" y="216.0" font-size="5.4" fill="#1630e4" font-weight="bold" text-anchor="start" textLength="95.5" lengthAdjust="spacingAndGlyphs" >CML 123 [Governing] [18.34 years]</text>
</g>
<g id="dlg">
<rect x="19.5" y="88" width="259" height="155.5" rx="5" fill="#20304f" opacity="0.10"/>
<rect x="20.8" y="89.5" width="256.2" height="152.3" rx="3" fill="#20304f" opacity="0.16"/>
<path d="M21.8 94.3 Q21.8 90.8 25.3 90.8 L271.5 90.8 Q275 90.8 275 94.3 L275 240.3 L21.8 240.3 Z" fill="url(#gFrame)" stroke="#2c3d5c" stroke-width="0.6"/>
<path d="M22.6 94.5 Q22.6 91.6 25.5 91.6 L271.3 91.6 Q274.2 91.6 274.2 94.5 L274.2 239.5 L22.6 239.5 Z" fill="none" stroke="#d8e4f0" stroke-width="0.5" opacity="0.6"/>
<rect x="22.3" y="103" width="2.7" height="137" fill="#b2c4da"/>
<rect x="271.9" y="103" width="2.8" height="137" fill="#b6c8de"/>
<rect x="22.3" y="237" width="252.4" height="2.9" fill="#a8bcd6"/>
<clipPath id="clipFrame"><rect x="22.2" y="91.2" width="252.4" height="12"/></clipPath><ellipse cx="54" cy="97" rx="36" ry="7" fill="url(#gGlow)" clip-path="url(#clipFrame)"/>
<rect x="27.3" y="94.2" width="3.6" height="5.2" fill="#f4f0ea" stroke="#8a6060" stroke-width="0.5"/>
<rect x="29.5" y="97.5" width="2.2" height="2.2" fill="#d02020"/>
<text x="34" y="98.8" font-size="5.3" fill="#1a1a2a" font-weight="normal" text-anchor="start" textLength="39.5" lengthAdjust="spacingAndGlyphs" >Vessel Data Chart</text>
<rect x="252.5" y="91" width="19.5" height="8.2" rx="1.5" fill="url(#gClose)" stroke="#6d2a2a" stroke-width="0.5"/>
<path d="M260.4 93.3 L264.1 96.9 M264.1 93.3 L260.4 96.9" stroke="#ffffff" stroke-width="1.1"/>
<rect x="24.9" y="103.2" width="247" height="133.9" fill="#f0f0f0" />
<rect x="24.9" y="103.2" width="247" height="133.9" fill="none" stroke="#8ea2c0" stroke-width="0.5"/>
<rect x="29.4" y="108.5" width="237.6" height="106.3" fill="#a6a6a6" />
<rect x="29.4" y="108.5" width="237.6" height="106.3" fill="none" stroke="#828790" stroke-width="0.5"/>
<rect x="29.7" y="108.8" width="231.8" height="8.7" fill="url(#gHdr)"/>
<line x1="29.7" y1="117.3" x2="261.5" y2="117.3" stroke="#c4c4c4" stroke-width="0.6"/>
<line x1="76.4" y1="108.8" x2="76.4" y2="117.3" stroke="#cfcfcf" stroke-width="0.6"/>
<line x1="122.6" y1="108.8" x2="122.6" y2="117.3" stroke="#cfcfcf" stroke-width="0.6"/>
<line x1="169.7" y1="108.8" x2="169.7" y2="117.3" stroke="#cfcfcf" stroke-width="0.6"/>
<line x1="216.2" y1="108.8" x2="216.2" y2="117.3" stroke="#cfcfcf" stroke-width="0.6"/>
<line x1="261.5" y1="108.8" x2="261.5" y2="117.3" stroke="#cfcfcf" stroke-width="0.6"/>
<text x="31.099999999999998" y="115.4" font-size="5.0" fill="#2c2630" font-weight="normal" text-anchor="start" textLength="28.8" lengthAdjust="spacingAndGlyphs" >Vessel Name</text>
<text x="77.80000000000001" y="115.4" font-size="5.0" fill="#2c2630" font-weight="normal" text-anchor="start" textLength="25.5" lengthAdjust="spacingAndGlyphs" >File Name</text>
<text x="124.0" y="115.4" font-size="5.0" fill="#2c2630" font-weight="normal" text-anchor="start" textLength="42.9" lengthAdjust="spacingAndGlyphs" >Projected Retirem...</text>
<text x="171.1" y="115.4" font-size="5.0" fill="#2c2630" font-weight="normal" text-anchor="start" textLength="44.2" lengthAdjust="spacingAndGlyphs" >Date of Last Thick...</text>
<text x="217.6" y="115.4" font-size="5.0" fill="#2c2630" font-weight="normal" text-anchor="start" textLength="42.7" lengthAdjust="spacingAndGlyphs" >Date of Next Req'...</text>
<rect x="29.7" y="117.5" width="231.8" height="73.76" fill="#ffffff" />
<text x="30.9" y="124.35" font-size="4.7" fill="#101010" font-weight="normal" text-anchor="start" textLength="44.1" lengthAdjust="spacingAndGlyphs" >API 510 - Cylinder...</text>
<text x="77.9" y="124.35" font-size="4.7" fill="#101010" font-weight="normal" text-anchor="start" textLength="44.1" lengthAdjust="spacingAndGlyphs" >API 510 - Cylinder...</text>
<text x="124.1" y="124.35" font-size="4.8" fill="#141414" font-weight="normal" text-anchor="start" letter-spacing="0.14">11/24/2028</text>
<text x="171.2" y="124.35" font-size="4.8" fill="#141414" font-weight="normal" text-anchor="start" letter-spacing="0.14">7/24/2010</text>
<text x="217.7" y="124.35" font-size="4.8" fill="#141414" font-weight="normal" text-anchor="start" letter-spacing="0.14">9/23/2019</text>
<line x1="29.7" y1="126.72" x2="261.5" y2="126.72" stroke="#efefef" stroke-width="0.6"/>
<text x="30.9" y="133.57" font-size="4.7" fill="#101010" font-weight="normal" text-anchor="start" textLength="44.1" lengthAdjust="spacingAndGlyphs" >API 510 - Cylinder...</text>
<text x="77.9" y="133.57" font-size="4.7" fill="#101010" font-weight="normal" text-anchor="start" textLength="44.1" lengthAdjust="spacingAndGlyphs" >API 510 - Cylinder...</text>
<text x="124.1" y="133.57" font-size="4.8" fill="#141414" font-weight="normal" text-anchor="start" letter-spacing="0.14">11/1/2013</text>
<text x="171.2" y="133.57" font-size="4.8" fill="#141414" font-weight="normal" text-anchor="start" letter-spacing="0.14">1/30/2005</text>
<text x="217.7" y="133.57" font-size="4.8" fill="#141414" font-weight="normal" text-anchor="start" letter-spacing="0.14">6/16/2009</text>
<line x1="29.7" y1="135.94" x2="261.5" y2="135.94" stroke="#efefef" stroke-width="0.6"/>
<text x="30.9" y="142.79" font-size="4.7" fill="#101010" font-weight="normal" text-anchor="start" textLength="42.3" lengthAdjust="spacingAndGlyphs" >API 510 - Large C...</text>
<text x="77.9" y="142.79" font-size="4.7" fill="#101010" font-weight="normal" text-anchor="start" textLength="42.3" lengthAdjust="spacingAndGlyphs" >API 510 - Large C...</text>
<text x="124.1" y="142.79" font-size="4.8" fill="#141414" font-weight="normal" text-anchor="start" letter-spacing="0.14">1/11/2009</text>
<text x="171.2" y="142.79" font-size="4.8" fill="#141414" font-weight="normal" text-anchor="start" letter-spacing="0.14">1/30/2005</text>
<text x="217.7" y="142.79" font-size="4.8" fill="#141414" font-weight="normal" text-anchor="start" letter-spacing="0.14">1/30/2007</text>
<line x1="29.7" y1="145.16" x2="261.5" y2="145.16" stroke="#efefef" stroke-width="0.6"/>
<text x="30.9" y="152.01" font-size="4.7" fill="#101010" font-weight="normal" text-anchor="start" textLength="44.4" lengthAdjust="spacingAndGlyphs" >API 510 - Nozzle G...</text>
<text x="77.9" y="152.01" font-size="4.7" fill="#101010" font-weight="normal" text-anchor="start" textLength="44.4" lengthAdjust="spacingAndGlyphs" >API 510 - Nozzle G...</text>
<text x="124.1" y="152.01" font-size="4.8" fill="#141414" font-weight="normal" text-anchor="start" letter-spacing="0.14">11/19/2028</text>
<text x="171.2" y="152.01" font-size="4.8" fill="#141414" font-weight="normal" text-anchor="start" letter-spacing="0.14">7/24/2010</text>
<text x="217.7" y="152.01" font-size="4.8" fill="#141414" font-weight="normal" text-anchor="start" letter-spacing="0.14">9/21/2019</text>
<line x1="29.7" y1="154.38" x2="261.5" y2="154.38" stroke="#efefef" stroke-width="0.6"/>
<text x="30.9" y="161.23" font-size="4.7" fill="#101010" font-weight="normal" text-anchor="start" textLength="40.8" lengthAdjust="spacingAndGlyphs" >API 510 - Nozzle ...</text>
<text x="77.9" y="161.23" font-size="4.7" fill="#101010" font-weight="normal" text-anchor="start" textLength="40.8" lengthAdjust="spacingAndGlyphs" >API 510 - Nozzle ...</text>
<text x="124.1" y="161.23" font-size="4.8" fill="#141414" font-weight="normal" text-anchor="start" letter-spacing="0.14">2/16/2027</text>
<text x="171.2" y="161.23" font-size="4.8" fill="#141414" font-weight="normal" text-anchor="start" letter-spacing="0.14">7/24/2010</text>
<text x="217.7" y="161.23" font-size="4.8" fill="#141414" font-weight="normal" text-anchor="start" letter-spacing="0.14">11/4/2018</text>
<line x1="29.7" y1="163.60" x2="261.5" y2="163.60" stroke="#efefef" stroke-width="0.6"/>
<text x="30.9" y="170.45" font-size="4.7" fill="#101010" font-weight="normal" text-anchor="start" textLength="44.4" lengthAdjust="spacingAndGlyphs" >API 510 - Skirt MA...</text>
<text x="77.9" y="170.45" font-size="4.7" fill="#101010" font-weight="normal" text-anchor="start" textLength="44.4" lengthAdjust="spacingAndGlyphs" >API 510 - Skirt MA...</text>
<text x="124.1" y="170.45" font-size="4.8" fill="#141414" font-weight="normal" text-anchor="start" letter-spacing="0.14">2/4/2023</text>
<text x="171.2" y="170.45" font-size="4.8" fill="#141414" font-weight="normal" text-anchor="start" letter-spacing="0.14">2/14/2013</text>
<text x="217.7" y="170.45" font-size="4.8" fill="#141414" font-weight="normal" text-anchor="start" letter-spacing="0.14">2/9/2018</text>
<line x1="29.7" y1="172.82" x2="261.5" y2="172.82" stroke="#efefef" stroke-width="0.6"/>
<text x="30.9" y="179.67" font-size="4.7" fill="#101010" font-weight="normal" text-anchor="start" textLength="42.3" lengthAdjust="spacingAndGlyphs" >API 510 - Small C...</text>
<text x="77.9" y="179.67" font-size="4.7" fill="#101010" font-weight="normal" text-anchor="start" textLength="42.3" lengthAdjust="spacingAndGlyphs" >API 510 - Small C...</text>
<text x="124.1" y="179.67" font-size="4.8" fill="#141414" font-weight="normal" text-anchor="start" letter-spacing="0.14">6/18/2015</text>
<text x="171.2" y="179.67" font-size="4.8" fill="#141414" font-weight="normal" text-anchor="start" letter-spacing="0.14">12/1/2009</text>
<text x="217.7" y="179.67" font-size="4.8" fill="#141414" font-weight="normal" text-anchor="start" letter-spacing="0.14">9/9/2012</text>
<line x1="29.7" y1="182.04" x2="261.5" y2="182.04" stroke="#efefef" stroke-width="0.6"/>
<text x="30.9" y="188.89000000000001" font-size="4.7" fill="#101010" font-weight="normal" text-anchor="start" textLength="44.1" lengthAdjust="spacingAndGlyphs" >API 510 - Ellipsoid...</text>
<text x="77.9" y="188.89000000000001" font-size="4.7" fill="#101010" font-weight="normal" text-anchor="start" textLength="44.1" lengthAdjust="spacingAndGlyphs" >API 510 - Ellipsoid...</text>
<text x="124.1" y="188.89000000000001" font-size="4.8" fill="#141414" font-weight="normal" text-anchor="start" letter-spacing="0.14">12/9/2005</text>
<text x="171.2" y="188.89000000000001" font-size="4.8" fill="#141414" font-weight="normal" text-anchor="start" letter-spacing="0.14">1/30/2005</text>
<text x="217.7" y="188.89000000000001" font-size="4.8" fill="#141414" font-weight="normal" text-anchor="start" letter-spacing="0.14">12/8/2005</text>
<line x1="76.4" y1="117.5" x2="76.4" y2="191.26" stroke="#efefef" stroke-width="0.6"/>
<line x1="122.6" y1="117.5" x2="122.6" y2="191.26" stroke="#efefef" stroke-width="0.6"/>
<line x1="169.7" y1="117.5" x2="169.7" y2="191.26" stroke="#efefef" stroke-width="0.6"/>
<line x1="216.2" y1="117.5" x2="216.2" y2="191.26" stroke="#efefef" stroke-width="0.6"/>
<rect x="29.3" y="225.5" width="47.4" height="9" rx="1.2" fill="url(#gBtn)" stroke="#707070" stroke-width="0.5"/>
<text x="53" y="232.3" font-size="4.9" fill="#1a1a1a" font-weight="normal" text-anchor="middle" textLength="35.5" lengthAdjust="spacingAndGlyphs" >Customize Table</text>
<rect x="227.2" y="226.3" width="30.7" height="8.4" rx="1.2" fill="url(#gBtn)" stroke="#3c7fb1" stroke-width="0.7"/>
<rect x="227.9" y="227" width="29.3" height="7" rx="0.8" fill="none" stroke="#a8dcf4" stroke-width="0.5"/>
<text x="242.5" y="232.7" font-size="4.9" fill="#1a1a1a" font-weight="normal" text-anchor="middle" textLength="8" lengthAdjust="spacingAndGlyphs" >OK</text>
<clipPath id="clipNote"><rect x="24.9" y="215" width="247" height="22.1"/></clipPath>
<g clip-path="url(#clipNote)">
<text x="78.4" y="222.2" font-size="5.0" fill="#1e1e1e" font-weight="normal" text-anchor="start" textLength="144" lengthAdjust="spacingAndGlyphs" >*The Projected Retirement Date is stored in each file from the last time</text>
<text x="78.4" y="227.6" font-size="5.0" fill="#1e1e1e" font-weight="normal" text-anchor="start" textLength="128" lengthAdjust="spacingAndGlyphs" >the remaining life calculation was run. It may not be accurate if</text>
<text x="78.4" y="233.0" font-size="5.0" fill="#1e1e1e" font-weight="normal" text-anchor="start" textLength="143" lengthAdjust="spacingAndGlyphs" >changes were made to the model and the remaining life calculation was</text>
<text x="78.4" y="238.39999999999998" font-size="5.0" fill="#1e1e1e" font-weight="normal" text-anchor="start" textLength="82" lengthAdjust="spacingAndGlyphs" >not run again before this file was saved.</text>
</g>
</g>
</svg></body></html>
